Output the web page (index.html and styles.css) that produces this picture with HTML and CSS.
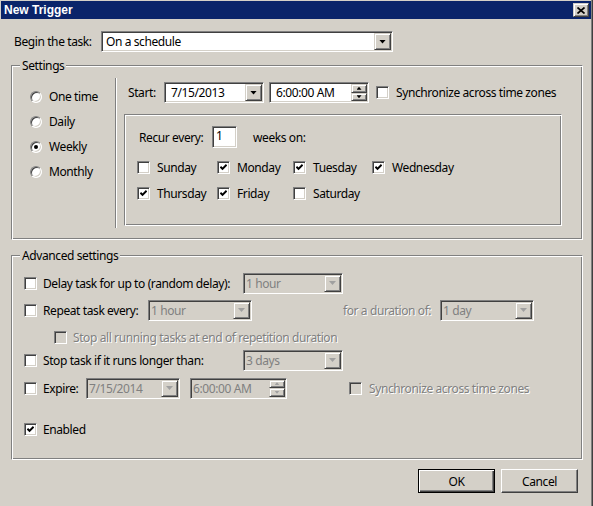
FILE: index.html
```html
<!DOCTYPE html>
<html lang="en">
<head>
  <meta charset="UTF-8">
  <title>New Trigger</title>
  <link rel="stylesheet" href="styles.css">
</head>
<body>
  <div class="window">
    <!-- title bar -->
    <div class="title-bar">
      <span class="title">New Trigger</span>
      <span class="close-btn raised">
        <svg width="8" height="7" viewBox="0 0 8 7"><path d="M0.5 0.5 L7.5 6.5 M7.5 0.5 L0.5 6.5" stroke="#000" stroke-width="1.7" fill="none"/></svg>
      </span>
    </div>

    <div class="dialog">
      <div class="begin-row">
        <span class="begin-label">Begin the task:</span>
        <div class="combo sunken begin-combo">
          <span class="combo-text">On a schedule</span>
          <span class="drop raised"><i class="arrow"></i></span>
        </div>
      </div>

      <!-- Settings -->
      <fieldset class="group">
        <legend>Settings</legend>
        <div class="settings-body">
          <div class="radio-list">
            <div class="radio-row"><span class="radio sunken"></span><span>One time</span></div>
            <div class="radio-row"><span class="radio sunken"></span><span>Daily</span></div>
            <div class="radio-row"><span class="radio sunken checked"></span><span>Weekly</span></div>
            <div class="radio-row"><span class="radio sunken"></span><span>Monthly</span></div>
          </div>
          <div class="vsep"></div>
          <div class="schedule">
            <div class="start-row">
              <span class="start-label">Start:</span>
              <div class="combo sunken date-combo">
                <span class="combo-text">7/15/2013</span>
                <span class="drop raised"><i class="arrow"></i></span>
              </div>
              <div class="combo sunken time-spin">
                <span class="combo-text">6:00:00 AM</span>
                <span class="spin-btns">
                  <span class="spin-btn raised"><i class="arrow-up"></i></span>
                  <span class="spin-btn raised"><i class="arrow-down"></i></span>
                </span>
              </div>
              <span class="check sunken sync-check"></span>
              <span class="check-label">Synchronize across time zones</span>
            </div>

            <div class="recur-box etched">
              <div class="recur-row">
                <span class="recur-label">Recur every:</span>
                <div class="field sunken recur-input">1</div>
                <span>weeks on:</span>
              </div>
              <div class="days">
                <div class="day"><span class="check sunken"></span>Sunday</div>
                <div class="day"><span class="check sunken"><svg width="7" height="7" viewBox="0 0 7 7"><path d="M0.4 2.8 L2.5 4.9 L6.6 0.8" stroke="#000" stroke-width="2" fill="none"/></svg></span>Monday</div>
                <div class="day"><span class="check sunken"><svg width="7" height="7" viewBox="0 0 7 7"><path d="M0.4 2.8 L2.5 4.9 L6.6 0.8" stroke="#000" stroke-width="2" fill="none"/></svg></span>Tuesday</div>
                <div class="day"><span class="check sunken"><svg width="7" height="7" viewBox="0 0 7 7"><path d="M0.4 2.8 L2.5 4.9 L6.6 0.8" stroke="#000" stroke-width="2" fill="none"/></svg></span>Wednesday</div>
                <div class="day"><span class="check sunken"><svg width="7" height="7" viewBox="0 0 7 7"><path d="M0.4 2.8 L2.5 4.9 L6.6 0.8" stroke="#000" stroke-width="2" fill="none"/></svg></span>Thursday</div>
                <div class="day"><span class="check sunken"><svg width="7" height="7" viewBox="0 0 7 7"><path d="M0.4 2.8 L2.5 4.9 L6.6 0.8" stroke="#000" stroke-width="2" fill="none"/></svg></span>Friday</div>
                <div class="day"><span class="check sunken"></span>Saturday</div>
              </div>
            </div>
          </div>
        </div>
      </fieldset>

      <!-- Advanced settings -->
      <fieldset class="group advanced">
        <legend>Advanced settings</legend>
        <div class="adv-body">
          <div class="adv-row">
            <span class="check sunken"></span>
            <span class="lbl-long">Delay task for up to (random delay):</span>
            <div class="combo sunken disabled w-delay">
              <span class="combo-text">1 hour</span>
              <span class="drop raised"><i class="arrow"></i></span>
            </div>
          </div>
          <div class="adv-row">
            <span class="check sunken"></span>
            <span class="lbl-repeat">Repeat task every:</span>
            <div class="combo sunken disabled w-repeat">
              <span class="combo-text">1 hour</span>
              <span class="drop raised"><i class="arrow"></i></span>
            </div>
            <span class="dim lbl-duration">for a duration of:</span>
            <div class="combo sunken disabled w-duration">
              <span class="combo-text">1 day</span>
              <span class="drop raised"><i class="arrow"></i></span>
            </div>
          </div>
          <div class="adv-row stop-all">
            <span class="check sunken disabled"></span>
            <span class="dim">Stop all running tasks at end of repetition duration</span>
          </div>
          <div class="adv-row stop-task">
            <span class="check sunken"></span>
            <span class="lbl-long">Stop task if it runs longer than:</span>
            <div class="combo sunken disabled w-stop">
              <span class="combo-text">3 days</span>
              <span class="drop raised"><i class="arrow"></i></span>
            </div>
          </div>
          <div class="adv-row expire">
            <span class="check sunken"></span>
            <span class="lbl-expire">Expire:</span>
            <div class="combo sunken disabled w-expire-date">
              <span class="combo-text">7/15/2014</span>
              <span class="drop raised"><i class="arrow"></i></span>
            </div>
            <div class="combo sunken disabled w-expire-time">
              <span class="combo-text">6:00:00 AM</span>
              <span class="spin-btns">
                <span class="spin-btn raised"><i class="arrow-up"></i></span>
                <span class="spin-btn raised"><i class="arrow-down"></i></span>
              </span>
            </div>
            <span class="check sunken disabled expire-sync"></span>
            <span class="dim">Synchronize across time zones</span>
          </div>
          <div class="adv-row enabled">
            <span class="check sunken"><svg width="7" height="7" viewBox="0 0 7 7"><path d="M0.4 2.8 L2.5 4.9 L6.6 0.8" stroke="#000" stroke-width="2" fill="none"/></svg></span>
            <span>Enabled</span>
          </div>
        </div>
      </fieldset>

      <div class="buttons">
        <button class="btn default">OK</button>
        <button class="btn">Cancel</button>
      </div>
    </div>
  </div>
</body>
</html>
```

FILE: styles.css
```css
body {
  margin: 0;
  background-color: #d4d0c8;
  font-family: 'Noto Sans', 'Open Sans', sans-serif;
  font-size: 12px;
  letter-spacing: -0.4px;
  color: #000;
}
.window {
  width: 593px;
  height: 506px;
  box-sizing: border-box;
  padding-top: 1px;
  border-right: 1px solid #404040;
  box-shadow: inset -1px 0 #808080;
  overflow: hidden;
}

/* 3d borders */
.raised {
  border: 1px solid;
  border-color: #d4d0c8 #404040 #404040 #d4d0c8;
  box-shadow: inset 1px 1px #fff, inset -1px -1px #808080;
  background-color: #d4d0c8;
}
.sunken {
  border: 1px solid;
  border-color: #808080 #fff #fff #808080;
  box-shadow: inset 1px 1px #404040, inset -1px -1px #d4d0c8;
}
.etched {
  border: 1px solid;
  border-color: #808080 #fff #fff #808080;
  box-shadow: inset 1px 1px #fff, inset -1px -1px #808080;
}

.title-bar {
  height: 18px;
  margin: 0 1px;
  padding: 0 2px 0 3px;
  background-color: #0a246a;
  display: flex;
  align-items: center;
  justify-content: space-between;
}
.title {
  color: #fff;
  font-family: 'Liberation Sans', Arial, sans-serif;
  font-weight: bold;
  font-size: 12px;
  letter-spacing: 0;
}
.close-btn {
  width: 16px;
  height: 14px;
  box-sizing: border-box;
  display: flex;
  align-items: center;
  justify-content: center;
}

.dialog {
  padding: 0 9px 0 11px;
}
.begin-row {
  display: flex;
  align-items: center;
  height: 21px;
  margin-top: 12px;
}
.begin-label {
  width: 90px;
  padding-left: 3px;
  box-sizing: border-box;
}
.begin-combo {
  width: 292px;
}

/* combo boxes */
.combo {
  display: flex;
  height: 21px;
  box-sizing: border-box;
  padding: 1px;
  background-color: #fff;
  flex: none;
}
.combo-text {
  flex: 1;
  display: flex;
  align-items: center;
  padding-left: 3px;
  white-space: nowrap;
  overflow: hidden;
}
.drop {
  width: 17px;
  box-sizing: border-box;
  display: flex;
  align-items: center;
  justify-content: center;
}
.arrow {
  width: 7px;
  height: 4px;
  background-color: #000;
  clip-path: polygon(0 0, 100% 0, 50% 100%);
}
.spin-btns {
  width: 16px;
  display: flex;
  flex-direction: column;
}
.spin-btn {
  flex: 1;
  box-sizing: border-box;
  display: flex;
  align-items: center;
  justify-content: center;
}
.arrow-up, .arrow-down {
  width: 5px;
  height: 3px;
  background-color: #000;
}
.arrow-up {
  clip-path: polygon(50% 0, 100% 100%, 0 100%);
}
.arrow-down {
  clip-path: polygon(0 0, 100% 0, 50% 100%);
}
.combo.disabled {
  background-color: #d4d0c8;
  color: #808080;
}
.combo.disabled .combo-text {
  padding-left: 1px;
}
.combo.disabled .arrow, .combo.disabled .arrow-up, .combo.disabled .arrow-down {
  background-color: #a0a0a0;
}

/* check boxes and radios */
.check {
  width: 13px;
  height: 13px;
  box-sizing: border-box;
  background-color: #fff;
  display: flex;
  align-items: center;
  justify-content: center;
  flex: none;
}
.check.disabled {
  background-color: #d4d0c8;
}
.radio {
  width: 12px;
  height: 12px;
  box-sizing: border-box;
  border-radius: 50%;
  background-color: #fff;
  display: flex;
  align-items: center;
  justify-content: center;
  flex: none;
}
.radio.checked::after {
  content: '';
  width: 4px;
  height: 4px;
  border-radius: 50%;
  background-color: #000;
}
.dim {
  color: #808080;
  text-shadow: 1px 1px 0 #fff;
}

/* group boxes */
.group {
  margin: 6px 0 0;
  padding: 5px 0 11px;
  border: 1px solid;
  border-color: #808080 #fff #fff #808080;
  box-shadow: inset 1px 1px #fff, inset -1px -1px #808080;
  min-width: 0;
}
.group legend {
  margin-left: 8px;
  padding: 0 2px;
  line-height: 15px;
  background-color: #d4d0c8;
}

.settings-body {
  display: flex;
  height: 150px;
}
.radio-list {
  width: 103px;
  padding: 6px 0 0 18px;
  box-sizing: border-box;
}
.radio-row {
  display: flex;
  align-items: center;
  height: 25px;
}
.radio-row .radio {
  margin-right: 7px;
}
.vsep {
  border-left: 1px solid #808080;
  border-right: 1px solid #fff;
}
.start-row {
  display: flex;
  align-items: center;
  height: 21px;
  margin-top: 4px;
  padding-left: 11px;
}
.start-label {
  width: 36px;
}
.date-combo {
  width: 100px;
  margin-right: 5px;
}
.date-combo .combo-text, .time-spin .combo-text {
  padding-left: 5px;
}
.time-spin {
  width: 100px;
}
.sync-check {
  margin: 0 7px;
}

.recur-box {
  margin: 11px 0 0 7px;
  width: 438px;
  box-sizing: border-box;
  padding: 11px 0 19px 12px;
}
.recur-row {
  display: flex;
  align-items: center;
  height: 22px;
}
.recur-label {
  width: 73px;
  margin-left: 2px;
}
.recur-input {
  width: 25px;
  height: 22px;
  box-sizing: border-box;
  background-color: #fff;
  padding-left: 3px;
  margin-right: 16px;
  line-height: 18px;
}
.days {
  display: grid;
  grid-template-columns: 80px 76px 79px auto;
  grid-auto-rows: 26px;
  margin-top: 6px;
}
.day {
  display: flex;
  align-items: center;
}
.day .check {
  margin-right: 7px;
}

/* advanced */
.advanced {
  margin-top: 8px;
  padding: 9px 0 19px;
}
.adv-body {
  padding-left: 12px;
}
.adv-row {
  display: flex;
  align-items: center;
  height: 22px;
  margin-bottom: 5px;
  white-space: nowrap;
}
.adv-row > .check {
  margin-right: 6px;
}
.adv-row.stop-all {
  padding-left: 30px;
  margin-bottom: 1px;
}
.adv-row.stop-task {
  margin-bottom: 6px;
}
.adv-row.expire {
  margin-bottom: 19px;
}
.adv-row.enabled {
  margin-bottom: 0;
}
.lbl-long {
  width: 200px;
}
.lbl-repeat {
  width: 105px;
}
.lbl-duration {
  margin-left: 91px;
  width: 97px;
}
.lbl-expire {
  width: 43px;
}
.w-delay {
  width: 100px;
}
.w-repeat {
  width: 104px;
}
.w-duration {
  width: 94px;
}
.w-stop {
  width: 100px;
}
.w-expire-date {
  width: 94px;
  margin-right: 10px;
}
.w-expire-time {
  width: 97px;
}
.w-expire-date .combo-text, .w-expire-time .combo-text {
  padding-left: 6px;
}
.adv-row .expire-sync {
  margin-left: 62px;
  margin-right: 7px;
}

/* buttons */
.buttons {
  display: flex;
  justify-content: flex-end;
  gap: 6px;
  margin-top: 9px;
  padding-right: 5px;
}
.btn {
  width: 77px;
  height: 24px;
  padding: 0;
  font-family: inherit;
  font-size: 12px;
  letter-spacing: -0.4px;
  color: #000;
  background-color: #d4d0c8;
  border: 1px solid;
  border-color: #fff #404040 #404040 #fff;
  box-shadow: inset -1px -1px #808080;
}
.btn.default {
  border-color: #000;
  box-shadow: inset 1px 1px #fff, inset -1px -1px #404040, inset -2px -2px #808080;
}
```
